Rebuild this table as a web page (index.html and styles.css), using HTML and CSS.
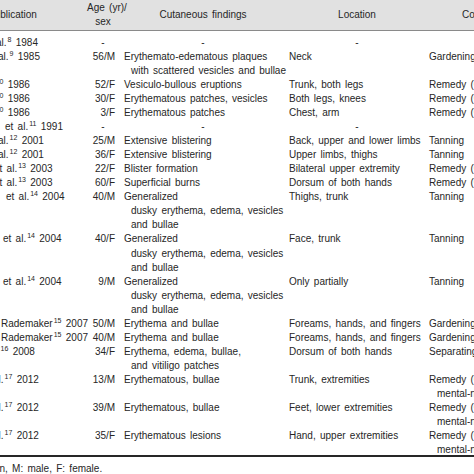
FILE: index.html
```html
<!DOCTYPE html>
<html>
<head>
<meta charset="utf-8">
<link rel="stylesheet" href="styles.css">
</head>
<body>
<div class="page">
<table class="cases">
<colgroup>
<col class="c-pub"><col class="c-age"><col class="c-find"><col class="c-loc"><col class="c-con">
</colgroup>
<thead>
<tr>
<th class="h-pub"><span class="frag o-12">Publication</span></th>
<th class="h-age">Age (yr)/<br>sex</th>
<th class="h-find">Cutaneous findings</th>
<th class="h-loc">Location</th>
<th class="h-con">Contact type</th>
</tr>
</thead>
<tbody>
<tr class="first">
<td class="pub"><span class="frag o-4">al.<sup>8</sup> 1984</span></td>
<td class="age dash">-</td><td class="find dash">-</td><td class="loc dash">-</td><td class="con"></td>
</tr>
<tr>
<td class="pub"><span class="frag o-2">al.<sup>9</sup> 1985</span></td>
<td class="age">56/M</td><td class="find">Erythemato-edematous plaques<br>with scattered vesicles and bullae</td><td class="loc">Neck</td><td class="con">Gardening</td>
</tr>
<tr>
<td class="pub"><span class="frag o-16">al.<sup>10</sup> 1986</span></td>
<td class="age">52/F</td><td class="find">Vesiculo-bullous eruptions</td><td class="loc">Trunk, both legs</td><td class="con">Remedy (Oral intake)</td>
</tr>
<tr>
<td class="pub"><span class="frag o-16">al.<sup>10</sup> 1986</span></td>
<td class="age">30/F</td><td class="find">Erythematous patches, vesicles</td><td class="loc">Both legs, knees</td><td class="con">Remedy (Oral intake)</td>
</tr>
<tr>
<td class="pub"><span class="frag o-16">al.<sup>10</sup> 1986</span></td>
<td class="age">3/F</td><td class="find">Erythematous patches</td><td class="loc">Chest, arm</td><td class="con">Remedy (Oral intake)</td>
</tr>
<tr>
<td class="pub"><span class="frag o5">et al.<sup>11</sup> 1991</span></td>
<td class="age dash">-</td><td class="find dash">-</td><td class="loc dash">-</td><td class="con"></td>
</tr>
<tr>
<td class="pub"><span class="frag o-2">al.<sup>12</sup> 2001</span></td>
<td class="age">25/M</td><td class="find">Extensive blistering</td><td class="loc">Back, upper and lower limbs</td><td class="con">Tanning</td>
</tr>
<tr>
<td class="pub"><span class="frag o-2">al.<sup>12</sup> 2001</span></td>
<td class="age">36/F</td><td class="find">Extensive blistering</td><td class="loc">Upper limbs, thighs</td><td class="con">Tanning</td>
</tr>
<tr>
<td class="pub"><span class="frag o-6">et al.<sup>13</sup> 2003</span></td>
<td class="age">22/F</td><td class="find">Blister formation</td><td class="loc">Bilateral upper extremity</td><td class="con">Remedy (Oral intake)</td>
</tr>
<tr>
<td class="pub"><span class="frag o-6">et al.<sup>13</sup> 2003</span></td>
<td class="age">60/F</td><td class="find">Superficial burns</td><td class="loc">Dorsum of both hands</td><td class="con">Remedy (Oral intake)</td>
</tr>
<tr>
<td class="pub"><span class="frag o6">et al.<sup>14</sup> 2004</span></td>
<td class="age">40/M</td><td class="find">Generalized<br>dusky erythema, edema, vesicles<br>and bullae</td><td class="loc">Thighs, trunk</td><td class="con">Tanning</td>
</tr>
<tr>
<td class="pub"><span class="frag o3">et al.<sup>14</sup> 2004</span></td>
<td class="age">40/F</td><td class="find">Generalized<br>dusky erythema, edema, vesicles<br>and bullae</td><td class="loc">Face, trunk</td><td class="con">Tanning</td>
</tr>
<tr>
<td class="pub"><span class="frag o3">et al.<sup>14</sup> 2004</span></td>
<td class="age">9/M</td><td class="find">Generalized<br>dusky erythema, edema, vesicles<br>and bullae</td><td class="loc">Only partially</td><td class="con">Tanning</td>
</tr>
<tr>
<td class="pub"><span class="frag o1">Rademaker<sup>15</sup> 2007</span></td>
<td class="age">50/M</td><td class="find">Erythema and bullae</td><td class="loc">Foreams, hands, and fingers</td><td class="con">Gardening</td>
</tr>
<tr>
<td class="pub"><span class="frag o1">Rademaker<sup>15</sup> 2007</span></td>
<td class="age">40/M</td><td class="find">Erythema and bullae</td><td class="loc">Foreams, hands, and fingers</td><td class="con">Gardening</td>
</tr>
<tr>
<td class="pub"><span class="frag o-11">al.<sup>16</sup> 2008</span></td>
<td class="age">34/F</td><td class="find">Erythema, edema, bullae,<br>and vitiligo patches</td><td class="loc">Dorsum of both hands</td><td class="con">Separating fig</td>
</tr>
<tr>
<td class="pub"><span class="frag o-7">al.<sup>17</sup> 2012</span></td>
<td class="age">13/M</td><td class="find">Erythematous, bullae</td><td class="loc">Trunk, extremities</td><td class="con">Remedy (Oral<br>mental-nerve)</td>
</tr>
<tr>
<td class="pub"><span class="frag o-7">al.<sup>17</sup> 2012</span></td>
<td class="age">39/M</td><td class="find">Erythematous, bullae</td><td class="loc">Feet, lower extremities</td><td class="con">Remedy (Oral<br>mental-nerve)</td>
</tr>
<tr>
<td class="pub"><span class="frag o-7">al.<sup>17</sup> 2012</span></td>
<td class="age">35/F</td><td class="find">Erythematous lesions</td><td class="loc">Hand, upper extremities</td><td class="con">Remedy (Oral<br>mental-nerve)</td>
</tr>
</tbody>
</table>
<div class="rule"></div>
<p class="note"><span class="frag o-35">unknown, M: male, F: female.</span></p>
</div>
</body>
</html>
```

FILE: styles.css
```css
html, body {
  margin: 0;
  padding: 0;
  background: #ffffff;
}
body {
  width: 474px;
  height: 474px;
  overflow: hidden;
  font-family: "Liberation Sans", Arial, sans-serif;
  font-size: 10px;
  color: #262626;
  word-spacing: 1.5px;
}
.page {
  width: 474px;
}
.cases {
  border-collapse: collapse;
  table-layout: fixed;
  width: 600px;
}
.c-pub { width: 87px; }
.c-age { width: 32px; }
.c-find { width: 168px; }
.c-loc { width: 140px; }
.c-con { width: 173px; }

thead th {
  background: #e1e1e1;
  height: 30px;
  padding: 0;
  font-weight: normal;
  line-height: 14.5px;
  text-align: center;
  vertical-align: middle;
  border-bottom: 1px solid #8a8a8a;
  white-space: nowrap;
}
thead th.h-pub, thead th.h-con { text-align: left; }
thead th.h-con { padding-left: 35px; }

tbody td {
  padding: 0;
  line-height: 14.07px;
  vertical-align: top;
  white-space: nowrap;
}
tbody tr.first td { padding-top: 4.6px; }

td.pub { overflow: visible; }
td.age { text-align: right; padding-right: 4px; }
td.find { padding-left: 12px; text-indent: -7px; }
td.loc { padding-left: 2px; }
td.con { padding-left: 10px; text-indent: -8px; }
td.dash { text-align: center; padding-left: 0; padding-right: 0; text-indent: 0; }

.frag { display: inline-block; white-space: nowrap; }
.o-35 { margin-left: -35px; }
.o-16 { margin-left: -16px; }
.o-12 { margin-left: -12px; }
.o-11 { margin-left: -11px; }
.o-7 { margin-left: -7px; }
.o-6 { margin-left: -6px; }
.o-4 { margin-left: -4px; }
.o-2 { margin-left: -2px; }
.o1 { margin-left: 1px; }
.o3 { margin-left: 3px; }
.o5 { margin-left: 5px; }
.o6 { margin-left: 6px; }

sup {
  font-size: 7px;
  line-height: 0;
  vertical-align: 4px;
  margin-left: 1px;
  word-spacing: 0;
}

.rule {
  height: 2px;
  background: #262626;
  margin-top: -2px;
}
.note {
  margin: 5px 0 0 0;
  line-height: 14px;
}
```
